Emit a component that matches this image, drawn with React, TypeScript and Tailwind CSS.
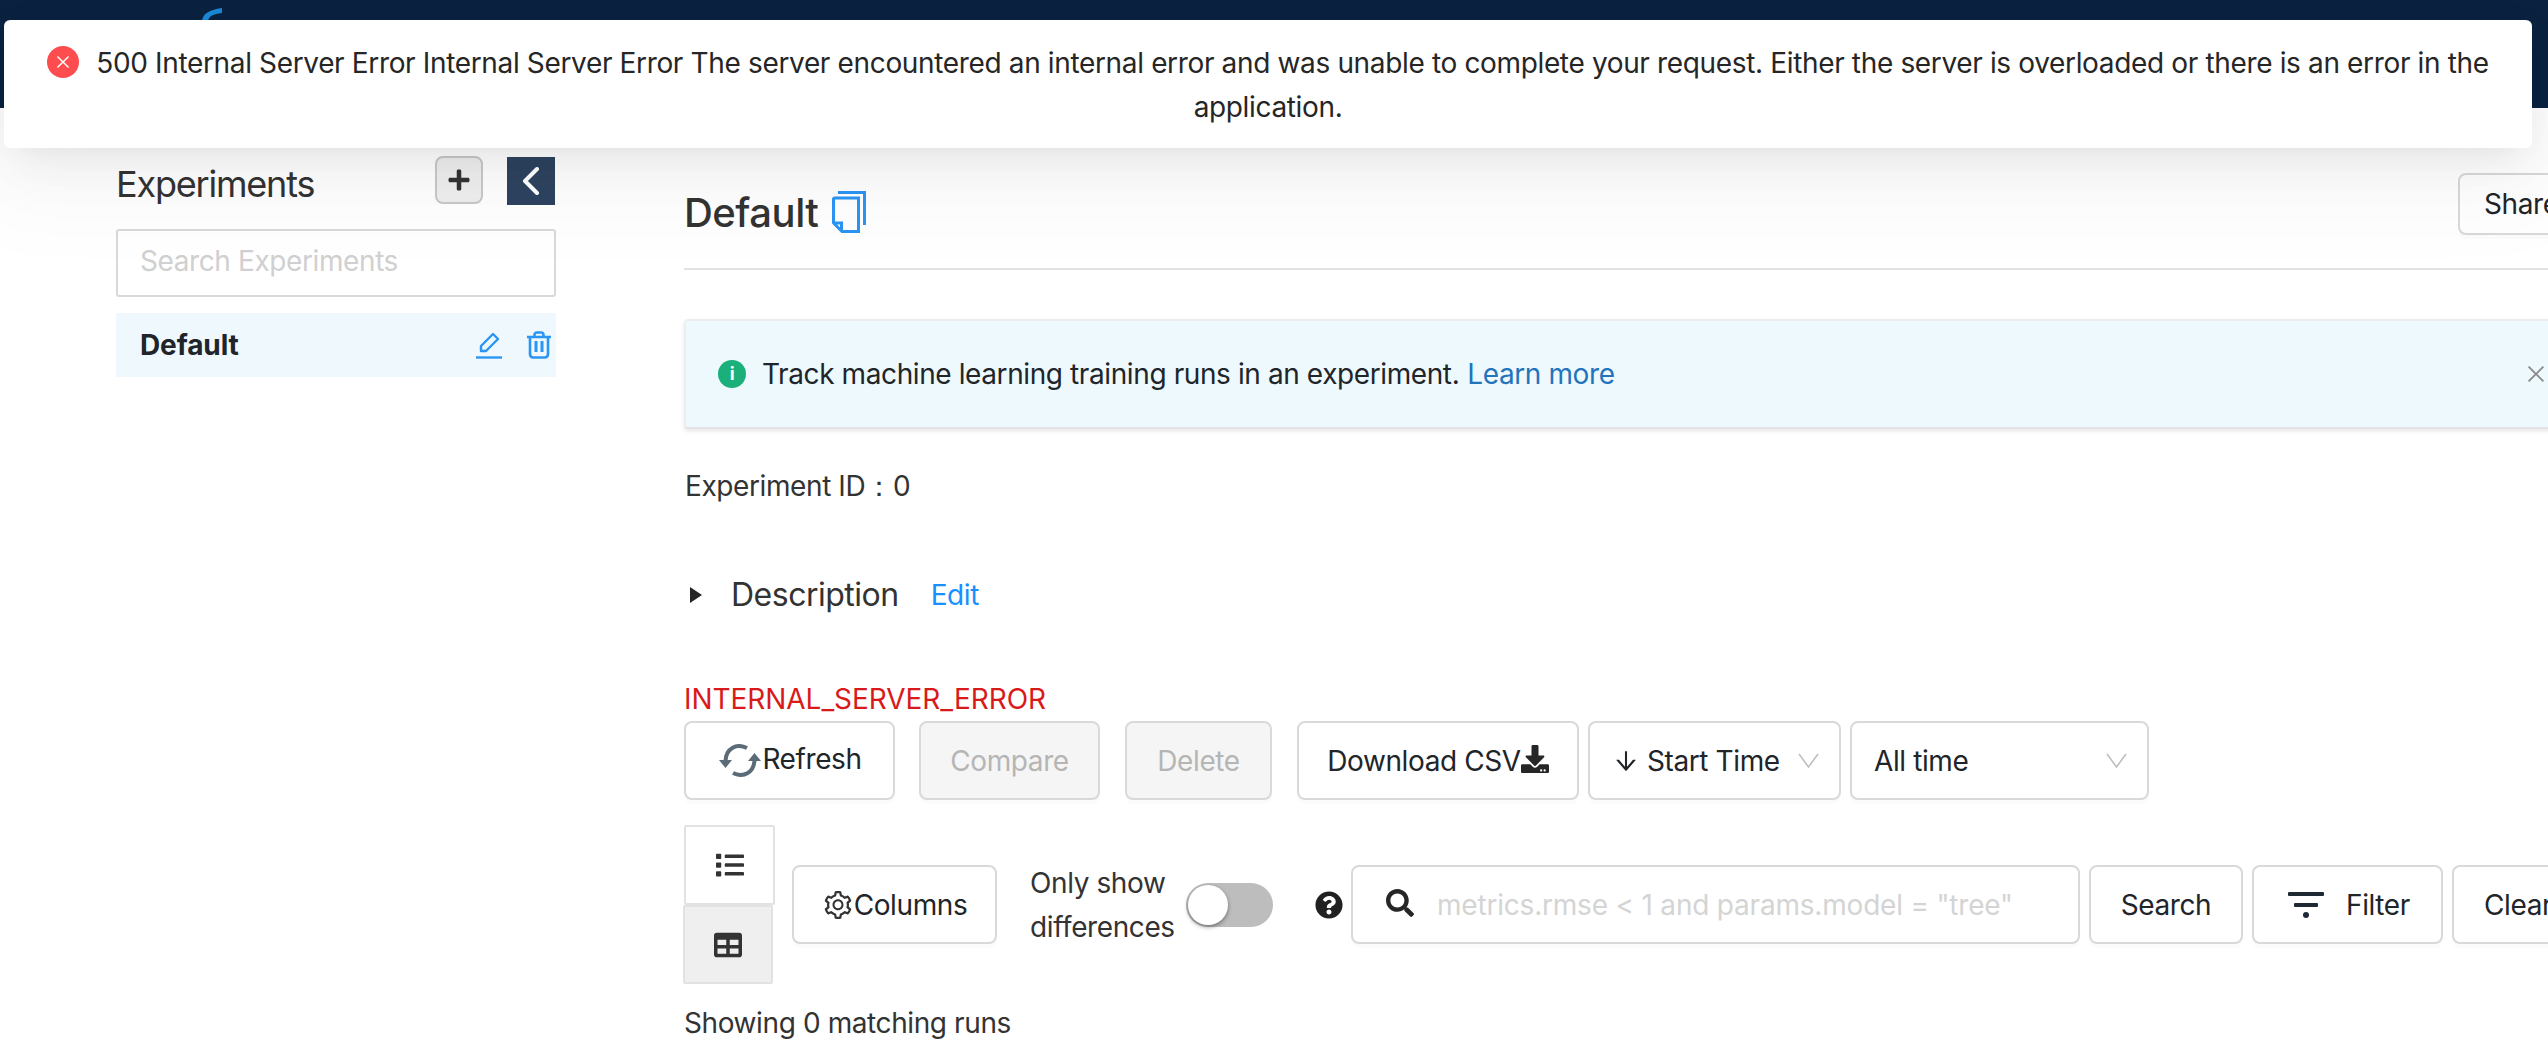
import React from "react";
import { AiOutlineSetting, AiOutlineArrowDown, AiOutlineClose } from "react-icons/ai";
import { FaDownload, FaList, FaTable, FaSearch, FaQuestionCircle, FaPlus } from "react-icons/fa";

const btn = "flex items-center border-2 border-[#d9d9d9] rounded-lg shadow-[0_4px_0_rgba(0,0,0,0.015)] shrink-0";

function Logo() {
  return (
    <svg width="24" height="14" viewBox="0 0 24 14" className="ml-[200px] mt-[7px]">
      <path d="M2 14 C3 7 8 3 22 1 L22 6 C13 7 9 9 8 14 Z" fill="#1a8bd8" />
    </svg>
  );
}

function PencilIcon() {
  return (
    <svg width="26" height="28" viewBox="0 0 26 28" fill="none" stroke="#2b95f3" strokeWidth="2.4">
      <path d="M5 20 V15 L17 3 L22 8 L10 20 Z" strokeLinejoin="round" />
      <path d="M0 26.5 H26" />
    </svg>
  );
}

function TrashIcon() {
  return (
    <svg width="24" height="28" viewBox="0 0 24 28" fill="none" stroke="#2b95f3" strokeWidth="2.6">
      <path d="M0 6 H24 M7.5 6 V4 Q7.5 1.5 10 1.5 H14 Q16.5 1.5 16.5 4 V6" />
      <path d="M3 6 V23 Q3 26.5 6.5 26.5 H17.5 Q21 26.5 21 23 V6" />
      <path d="M9 10 V21 M15 10 V21" strokeWidth="3" />
    </svg>
  );
}

function CopyIcon() {
  return (
    <svg width="34" height="42" viewBox="0 0 34 42" fill="none" stroke="#2b95f3" strokeWidth="3" className="ml-[14px]">
      <path d="M6 1.5 H32.5 V34" />
      <path d="M3 7 H26.5 V40.5 H10 L1.5 32 V8.5 Q1.5 7 3 7 Z" />
      <path d="M2 32 H9.5 V40" />
    </svg>
  );
}

function FilterIcon() {
  return (
    <svg width="36" height="26" viewBox="0 0 36 26" fill="#1f2933">
      <rect x="0" y="0" width="36" height="4" rx="1" />
      <rect x="6" y="11" width="24" height="4" rx="1" />
      <circle cx="18" cy="23" r="3" />
    </svg>
  );
}

function RefreshIcon() {
  return (
    <svg width="42" height="33" viewBox="0 0 42 33" fill="none" className="shrink-0 mr-[1px]">
      <path d="M28 4 C18 -1 7 4 6.5 17" stroke="#5c6b78" strokeWidth="4" />
      <path d="M0 16 H13 L6.5 24 Z" fill="#5c6b78" />
      <path d="M14 29 C24 34 35 29 35.5 16" stroke="#5c6b78" strokeWidth="4" />
      <path d="M29 17 H42 L35.5 9 Z" fill="#5c6b78" />
    </svg>
  );
}

function Chevron() {
  return (
    <svg width="21" height="15" viewBox="0 0 21 15" fill="none" stroke="#bfbfbf" strokeWidth="1.6" className="shrink-0">
      <path d="M1 1 L10.5 14 L20 1" />
    </svg>
  );
}

export default function App() {
  return (
    <div className="relative w-[2548px] h-[1052px] overflow-hidden bg-white font-['Inter','Liberation_Sans',sans-serif] text-[28px] tracking-[-0.4px] text-[#212529]">
      <header className="h-[108px] bg-[#0b2341] flex items-start">
        <Logo />
      </header>

      <div className="absolute left-[4px] top-[20px] z-10 w-[2528px] h-[128px] bg-white rounded-[6px] shadow-[0_12px_32px_-16px_rgba(0,0,0,0.08),0_18px_56px_0_rgba(0,0,0,0.05),0_24px_96px_32px_rgba(0,0,0,0.03)] pt-[21px] px-[30px] text-center leading-[44px] tracking-[-0.35px] text-[#262626]">
        <span className="inline-flex w-[32px] h-[32px] rounded-full bg-[#ff4d4f] items-center justify-center align-middle mr-[17px] mt-[-6px]">
          <AiOutlineClose className="text-white" size={18} />
        </span>
        500 Internal Server Error Internal Server Error The server encountered an internal error and was unable to complete your request. Either the server is overloaded or there is an error in the application.
      </div>

      <main className="flex">
        <aside className="w-[440px] ml-[116px] shrink-0 pt-[48px]">
          <div className="flex items-start h-[73px]">
            <h2 className="text-[36px] leading-[56px] tracking-[-1.2px] text-[#333] w-[319px]">Experiments</h2>
            <button className="w-[48px] h-[48px] rounded-lg border-2 border-[#c9c9c9] bg-[#efefef] flex items-center justify-center text-[#333]">
              <FaPlus size={24} />
            </button>
            <button className="w-[48px] h-[48px] ml-[24px] mt-px bg-[#2e4460] text-white flex items-center justify-center">
              <svg width="18" height="28" viewBox="0 0 18 28" fill="none" stroke="#fff" strokeWidth="4" strokeLinecap="round" strokeLinejoin="round">
                <path d="M15 2 L3 14 L15 26" />
              </svg>
            </button>
          </div>
          <div className="h-[68px] border-2 border-[#d9d9d9] rounded-[3px] flex items-center pl-[22px] pb-[4px] text-[#d0d0d0]">Search Experiments</div>
          <div className="mt-[16px] h-[64px] bg-[#eef8fd] flex items-center pl-[24px] pr-[5px] font-bold tracking-[-0.1px] text-[#212529]">
            <span className="flex-1">Default</span>
            <span className="flex items-center gap-[25px]">
              <PencilIcon />
              <TrashIcon />
            </span>
          </div>
        </aside>

        <section className="ml-[128px] flex-1 min-w-0 pt-[65px]">
          <div className="h-[97px] border-b-2 border-[#e2e2e2] flex items-start">
            <h1 className="text-[40px] leading-[80px] tracking-[-0.5px] text-[#333] font-medium">Default</h1>
            <div className="pt-[18px]"><CopyIcon /></div>
            <div className={`${btn} ml-auto w-[200px] h-[62px] pl-[24px] -mr-[110px] bg-white`}>Share</div>
          </div>

          <div className="mt-[49px] h-[110px] w-[2000px] bg-[#eef9fe] rounded-[4px] border-2 border-[#eeeeee] border-b-[#e4e4e4] shadow-[0_2px_4px_rgba(0,0,0,0.1)] flex items-center pl-[32px]">
            <span className="w-[28px] h-[28px] rounded-full bg-[#1bb07a] flex items-center justify-center text-white text-[18px] leading-none font-bold">i</span>
            <span className="ml-[16px]">Track machine learning training runs in an experiment.</span>
            <span className="ml-[8px] text-[#2374bb]">Learn more</span>
            <AiOutlineClose size={24} className="ml-auto mr-[134px] text-[#8c8c8c]" />
          </div>

          <div className="mt-[35px] leading-[44px] ml-px text-[#333]">Experiment ID：0</div>

          <div className="mt-[59px] flex items-center h-[56px]">
            <svg width="12" height="16" viewBox="0 0 12 16" className="ml-[6px]"><path d="M0 0 L12 8 L0 16 Z" fill="#262626" /></svg>
            <span className="text-[32px] tracking-[-0.5px] ml-[29px] text-[#333]">Description</span>
            <span className="ml-[32px] text-[#1890ff]">Edit</span>
          </div>

          <div className="mt-[58px] leading-[36px] tracking-[-0.05px] text-[#d91a1a]">INTERNAL_SERVER_ERROR</div>

          <div className="flex mt-[4px] h-[79px]">
            <div className={`${btn} w-[211px] h-[79px] justify-center pl-[2px] bg-white`}>
              <RefreshIcon /><span className="mb-[3px]">Refresh</span>
            </div>
            <div className={`${btn} w-[181px] h-[79px] justify-center ml-[24px] bg-[#f5f5f5] text-[#b5b5b5]`}>Compare</div>
            <div className={`${btn} w-[147px] h-[79px] justify-center ml-[25px] bg-[#f5f5f5] text-[#b5b5b5]`}>Delete</div>
            <div className={`${btn} w-[282px] h-[79px] justify-center ml-[25px] bg-white`}>Download CSV<FaDownload size={28} className="text-[#262626] mb-[4px]" /></div>
            <div className={`${btn} w-[253px] h-[79px] justify-between pl-[22px] pr-[20px] ml-[9px] bg-white`}>
              <span className="flex items-center gap-[7px]"><AiOutlineArrowDown size={28} />Start Time</span>
              <Chevron />
            </div>
            <div className={`${btn} w-[299px] h-[79px] justify-between pl-[22px] pr-[20px] ml-[9px] bg-white`}>
              All time
              <Chevron />
            </div>
          </div>

          <div className="flex mt-[25px]">
            <div className="w-[91px] shrink-0">
              <div className="w-[91px] h-[80px] border-2 border-[#e2e2e2] rounded-[2px] bg-white flex items-center justify-center text-[#333]"><FaList size={28} /></div>
              <div className="w-[90px] h-[79px] -ml-px border-2 border-[#e2e2e2] rounded-[2px] bg-[#efefef] flex items-center justify-center text-[#333]"><FaTable size={28} /></div>
            </div>
            <div className="flex items-start mt-[40px]">
              <div className={`${btn} w-[205px] h-[79px] justify-center ml-[17px] bg-white`}><AiOutlineSetting size={32} className="text-[#333]" />Columns</div>
              <div className="ml-[33px] w-[156px] leading-[44px] mt-[-4px] text-[#333] shrink-0">Only show differences</div>
              <div className="relative w-[87px] h-[44px] mt-[18px] ml-0 rounded-full bg-[#bdbdbd] shrink-0">
                <span className="absolute left-[2px] top-[2px] w-[40px] h-[40px] rounded-full bg-white shadow-[0_2px_4px_rgba(0,0,0,0.4)]" />
              </div>
              <FaQuestionCircle size={28} className="ml-[42px] mt-[26px] shrink-0 text-[#212121]" />
              <div className={`${btn} w-[729px] h-[79px] ml-[8px] pl-[33px] bg-white`}>
                <FaSearch size={28} className="text-[#262626] mb-[4px]" />
                <span className="ml-[23px] tracking-[-0.2px] text-[#d4d4d4]">metrics.rmse &lt; 1 and params.model = "tree"</span>
              </div>
              <div className={`${btn} w-[154px] h-[79px] justify-center ml-[9px] bg-white`}>Search</div>
              <div className={`${btn} w-[191px] h-[79px] justify-center pl-[3px] ml-[9px] bg-white`}><FilterIcon /><span className="ml-[22px]">Filter</span></div>
              <div className={`${btn} w-[140px] h-[79px] ml-[9px] pl-[30px] bg-white`}>Clear</div>
            </div>
          </div>

          <div className="mt-[17px] leading-[44px] text-[#333]">Showing 0 matching runs</div>
        </section>
      </main>
    </div>
  );
}
